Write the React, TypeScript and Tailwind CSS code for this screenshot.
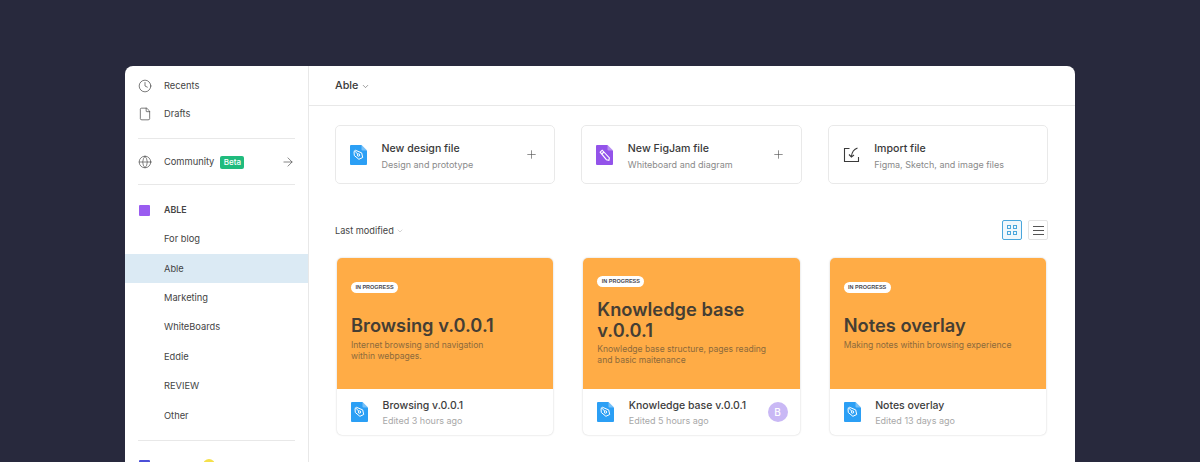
import { ChevronDown, Plus, ArrowRight, Clock, File, Globe } from 'lucide-react';
import type { ReactNode } from 'react';

function FileIcon({ kind = 'design' }: { kind?: 'design' | 'jam' }) {
  const fill = kind === 'design' ? '#2b9ff5' : '#9353ea';
  return (
    <svg width="17" height="20" viewBox="0 0 17 20" className="shrink-0">
      <path d="M1 0h10.5L17 5.5V19a1 1 0 0 1-1 1H1a1 1 0 0 1-1-1V1a1 1 0 0 1 1-1z" fill={fill} />
      <path d="M11.5 0L17 5.5h-4.5a1 1 0 0 1-1-1z" fill="#ffffff" fillOpacity="0.35" />
      {kind === 'design' ? (
        <g fill="none" stroke="#fff" strokeWidth="1">
          <path d="M4 6.5l1.5-1.2 6.2 2.6 1 4.6-3.8 1.8-4.6-3.8z" />
          <circle cx="8.5" cy="10" r="1.2" />
          <path d="M4.5 5.8l3.2 3.3" />
        </g>
      ) : (
        <g fill="none" stroke="#fff" strokeWidth="1.1">
          <path d="M4.2 7.2l2-2 7.2 7.6-.5 2.5-2.5-.6z" />
          <path d="M5.8 9l2.1-2" />
        </g>
      )}
    </svg>
  );
}

function SideRow({ label }: { label: string }) {
  return (
    <div className="h-[29.4px] pl-[39px] flex items-center text-[9.3px] text-[#444444]">{label}</div>
  );
}

function ActionCard({ title, sub, icon, plus = true }: { title: string; sub: string; icon: ReactNode; plus?: boolean }) {
  return (
    <div className="h-[59px] rounded-[5px] border border-[#e9e9e9] flex items-center pl-[14px] pr-[16px]">
      <div className="w-[17px] flex justify-center">{icon}</div>
      <div className="ml-[14.5px] flex-1 pt-[4px]">
        <div className="text-[10.6px] leading-[14px] font-medium text-[#3a3a3a]">{title}</div>
        <div className="mt-[3.5px] text-[9px] leading-[12px] text-[#8a8a8a]">{sub}</div>
      </div>
      {plus && <Plus className="w-[13px] h-[13px] text-[#555555]" strokeWidth={1.2} />}
    </div>
  );
}

function ThumbCard({ title, heading, desc, edited, pad, headingGap, descGap, avatar }: {
  title: string; heading: string[]; desc: string[]; edited: string; pad: string; headingGap: string; descGap: string; avatar?: boolean;
}) {
  return (
    <div className="mx-[2px] h-[177px] rounded-[5px] overflow-hidden shadow-[0_0_2px_rgba(0,0,0,0.22)] bg-white">
      <div className={`h-[131px] bg-[#ffac46] pl-[14px] ${pad}`}>
        <div className="w-[47px] h-[11px] rounded-full bg-white flex items-center justify-center text-[5.5px] font-bold text-[#4a4a52] font-['Liberation_Sans',sans-serif]">
          IN PROGRESS
        </div>
        <div className={`${headingGap} text-[18.3px] leading-[21px] font-semibold text-[#453e34]`}>
          {heading.map((h) => <div key={h}>{h}</div>)}
        </div>
        <div className={`${descGap} text-[8.55px] leading-[11px] text-[#8c6a3c]`}>
          {desc.map((d) => <div key={d}>{d}</div>)}
        </div>
      </div>
      <div className="h-[46px] flex items-center pl-[14px] pr-[12px]">
        <FileIcon />
        <div className="ml-[14.5px] flex-1">
          <div className="text-[10.5px] leading-[13px] font-medium text-[#3d3d3d]">{title}</div>
          <div className="mt-[3px] text-[9px] leading-[11px] text-[#a8a8a8]">{edited}</div>
        </div>
        {avatar && (
          <div className="w-[20px] h-[20px] rounded-full bg-[#c9b8f5] flex items-center justify-center text-[10px] font-medium text-white">B</div>
        )}
      </div>
    </div>
  );
}

export default function App() {
  const folders = ['For blog', 'Able', 'Marketing', 'WhiteBoards', 'Eddie', 'REVIEW', 'Other'];

  return (
    <div className="h-[462px] overflow-hidden bg-[#28293d] pt-[66px] px-[125px] font-['Inter',sans-serif]">
      <div className="h-[396px] bg-white rounded-t-[8px] flex overflow-hidden">
        {/* Sidebar */}
        <div className="w-[184px] shrink-0 border-r border-[#e8e8e8] pt-[6px]">
          <div className="h-[28px] pl-[13px] flex items-center text-[9.3px] text-[#444444]">
            <Clock className="w-[14px] h-[14px] text-[#444444]" strokeWidth={1.2} />
            <span className="ml-[12px]">Recents</span>
          </div>
          <div className="h-[28px] pl-[13px] flex items-center text-[9.3px] text-[#444444]">
            <File className="w-[14px] h-[14px] text-[#444444]" strokeWidth={1.2} />
            <span className="ml-[12px]">Drafts</span>
          </div>
          <div className="mx-[13px] mt-[10px] h-px bg-[#e8e8e8]" />
          <div className="mt-[9px] h-[28px] pl-[13px] pr-[13px] flex items-center text-[9.3px] text-[#444444]">
            <Globe className="w-[14px] h-[14px] text-[#444444]" strokeWidth={1.1} />
            <span className="ml-[12px]">Community</span>
            <span className="ml-[6px] w-[24px] h-[13px] rounded-[2px] bg-[#20bb7d] text-white text-[8px] font-medium flex items-center justify-center">Beta</span>
            <ArrowRight className="ml-auto w-[14px] h-[14px] text-[#444444]" strokeWidth={1.1} />
          </div>
          <div className="mx-[13px] mt-[8px] h-px bg-[#e8e8e8]" />
          <div className="mt-[11px] h-[28px] pl-[14px] flex items-center">
            <div className="w-[11px] h-[11px] rounded-[1px] bg-[#9a5cf0]" />
            <span className="ml-[14px] text-[8.8px] font-semibold text-[#444444]">ABLE</span>
          </div>
          <div className="mt-[0.5px]">
            {folders.map((f) => (
              <div key={f} className={f === 'Able' ? 'bg-[#dbeaf4]' : ''}>
                <SideRow label={f} />
              </div>
            ))}
          </div>
          <div className="mx-[13px] mt-[9.5px] h-px bg-[#e8e8e8]" />
          <div className="mt-[19px] h-[28px] pl-[14px] flex items-start text-[9.3px] text-[#444444]">
            <div className="w-[11px] h-[11px] rounded-[1px] bg-[#4b4fd8]" />
            <span className="ml-[14px]">Design</span>
            <div className="ml-[9px] -mt-[1px] w-[12px] h-[12px] rounded-full bg-[#f5e04a]" />
          </div>
        </div>

        {/* Main */}
        <div className="flex-1 min-w-0">
          <div className="h-[40px] border-b border-[#e8e8e8] pl-[26px] pt-px flex items-center">
            <span className="text-[10.8px] font-medium text-[#3a3a3a]">Able</span>
            <ChevronDown className="ml-[3px] w-[9px] h-[9px] text-[#555555]" strokeWidth={1.5} />
          </div>
          <div className="pl-[26px] pr-[27px]">
            <div className="mt-[19px] grid grid-cols-3 gap-[26px]">
              <ActionCard title="New design file" sub="Design and prototype" icon={<FileIcon />} />
              <ActionCard title="New FigJam file" sub="Whiteboard and diagram" icon={<FileIcon kind="jam" />} />
              <ActionCard
                title="Import file"
                sub="Figma, Sketch, and image files"
                plus={false}
                icon={
                  <svg width="17" height="17" viewBox="0 0 17 17" fill="none" stroke="#3a3a3a" strokeWidth="1.1">
                    <path d="M6.5 2.5H1.5V15.5H15.5V11" />
                    <path d="M14.5 2C11.5 3 9 5 8.4 10.5" />
                    <path d="M6 8.5L8.4 11l2.6-2" />
                  </svg>
                }
              />
            </div>
            <div className="mt-[36px] h-[20px] flex items-center">
              <span className="mt-px text-[9.2px] text-[#444444]">Last modified</span>
              <ChevronDown className="ml-[2px] mt-px w-[8px] h-[8px] text-[#aaaaaa]" strokeWidth={1.5} />
              <div className="ml-auto flex gap-[6px]">
                <div className="w-[20px] h-[20px] rounded-[2px] border border-[#4aa6dc] bg-[#f0f7fc] grid grid-cols-2 gap-[2px] p-[4px]">
                  <div className="border border-[#4aa6dc]" />
                  <div className="border border-[#4aa6dc]" />
                  <div className="border border-[#4aa6dc]" />
                  <div className="border border-[#4aa6dc]" />
                </div>
                <div className="w-[20px] h-[20px] rounded-[2px] border border-[#e4e4e4] flex flex-col justify-center gap-[3px] px-[3.5px]">
                  <div className="h-px bg-[#555555]" />
                  <div className="h-px bg-[#555555]" />
                  <div className="h-px bg-[#555555]" />
                </div>
              </div>
            </div>
            <div className="mt-[18px] grid grid-cols-3 gap-[26px]">
              <ThumbCard
                title="Browsing v.0.0.1"
                heading={['Browsing v.0.0.1']}
                desc={['Internet browsing and navigation', 'within webpages.']}
                edited="Edited 3 hours ago"
                pad="pt-[24px]"
                headingGap="mt-[22px]"
                descGap="mt-[4px]"
              />
              <ThumbCard
                title="Knowledge base v.0.0.1"
                heading={['Knowledge base', 'v.0.0.1']}
                desc={['Knowledge base structure, pages reading', 'and basic maitenance']}
                edited="Edited 5 hours ago"
                pad="pt-[18px]"
                headingGap="mt-[12px]"
                descGap="mt-[2.5px]"
                avatar
              />
              <ThumbCard
                title="Notes overlay"
                heading={['Notes overlay']}
                desc={['Making notes within browsing experience']}
                edited="Edited 13 days ago"
                pad="pt-[24px]"
                headingGap="mt-[22px]"
                descGap="mt-[4px]"
              />
            </div>
          </div>
        </div>
      </div>
    </div>
  );
}
